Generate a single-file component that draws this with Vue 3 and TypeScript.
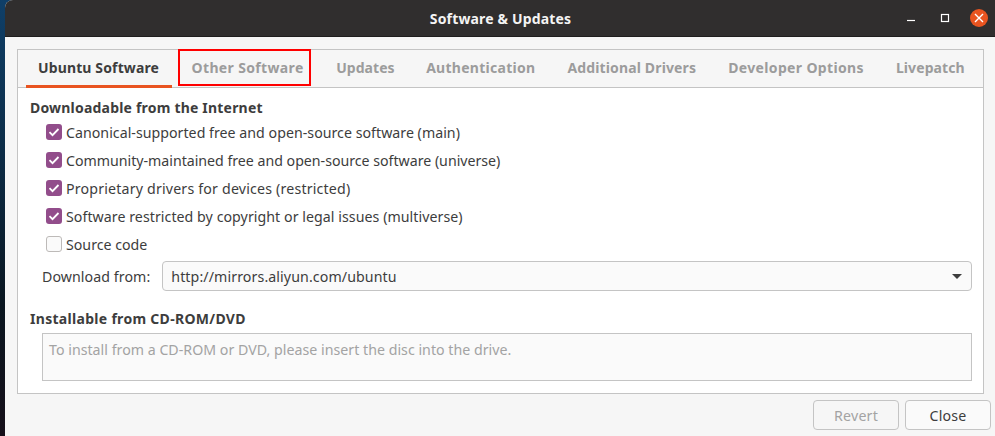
<script setup lang="ts">
const tabs = ['Ubuntu Software', 'Other Software', 'Updates', 'Authentication', 'Additional Drivers', 'Developer Options', 'Livepatch']
const sources = [
  { label: 'Canonical-supported free and open-source software (main)', on: true },
  { label: 'Community-maintained free and open-source software (universe)', on: true },
  { label: 'Proprietary drivers for devices (restricted)', on: true },
  { label: 'Software restricted by copyright or legal issues (multiverse)', on: true },
  { label: 'Source code', on: false },
]
</script>

<template>
  <div class="desktop">
    <div class="window">
      <header class="titlebar">
        <span class="title">Software &amp; Updates</span>
        <div class="controls">
          <svg class="ctl" width="16" height="16" viewBox="0 0 16 16"><path d="M4 10.5h8" stroke="#fff" stroke-width="1.2" fill="none" /></svg>
          <svg class="ctl" width="16" height="16" viewBox="0 0 16 16"><rect x="4.5" y="4.5" width="7" height="7" stroke="#fff" stroke-width="1.2" fill="none" /></svg>
          <span class="close-ctl">
            <svg width="18" height="18" viewBox="0 0 18 18"><path d="M5 5l8 8M13 5l-8 8" stroke="#fff" stroke-width="1.4" fill="none" /></svg>
          </span>
        </div>
      </header>

      <div class="body">
        <section class="notebook">
          <nav class="tabs">
            <div
              v-for="(t, i) in tabs"
              :key="t"
              class="tab"
              :class="{ active: i === 0, marked: i === 1 }"
            >{{ t }}</div>
          </nav>
          <div class="page">
            <h3 class="heading">Downloadable from the Internet</h3>
            <div class="checks">
              <label v-for="s in sources" :key="s.label" class="check">
                <span class="box" :class="{ on: s.on }">
                  <svg v-if="s.on" width="16" height="16" viewBox="0 0 16 16"><path d="M3.5 8.2l3 3 6-6.2" stroke="#fff" stroke-width="1.8" fill="none" /></svg>
                </span>
                <span>{{ s.label }}</span>
              </label>
            </div>
            <div class="download">
              <span class="dl-label">Download from:</span>
              <div class="combo">
                <span class="url">http://mirrors.aliyun.com/ubuntu</span>
                <span class="arrow"></span>
              </div>
            </div>
            <h3 class="heading cd">Installable from CD-ROM/DVD</h3>
            <div class="cdbox">To install from a CD-ROM or DVD, please insert the disc into the drive.</div>
          </div>
        </section>
        <footer class="actions">
          <button class="btn" disabled>Revert</button>
          <button class="btn">Close</button>
        </footer>
      </div>
    </div>
  </div>
</template>

<style>
html, body { margin: 0; background: #0b1a26; }
</style>

<style scoped>
.desktop {
  width: 995px;
  height: 436px;
  padding-left: 5px;
  box-sizing: border-box;
  background: linear-gradient(180deg, #0f3f68 0%, #0c2c47 35%, #0a1620 70%, #16101a 100%);
  font-family: "Noto Sans", sans-serif;
  font-size: 14.2px;
  color: #3d3d3d;
  overflow: hidden;
}
.window {
  height: 100%;
  display: flex;
  flex-direction: column;
  background: #f6f6f6;
  border-radius: 8px 0 0 0;
  overflow: hidden;
}
.titlebar {
  height: 37px;
  flex: none;
  position: relative;
  background: #302e2e;
  border-bottom: 1px solid #1f1e1e;
  box-sizing: border-box;
  display: flex;
  align-items: center;
  justify-content: center;
}
.title {
  color: #f4f4f4;
  font-weight: 700;
  font-size: 14px;
  letter-spacing: 0.15px;
  margin-left: 1px;
}
.controls {
  position: absolute;
  right: 7px;
  top: 9px;
  display: flex;
  align-items: center;
  gap: 18px;
}
.ctl { display: block; }
.ctl + .ctl { margin-right: -1px; }
.close-ctl {
  width: 18px;
  height: 18px;
  border-radius: 50%;
  background: #e95420;
  display: block;
}
.close-ctl svg { display: block; }
.body {
  flex: 1;
  display: flex;
  flex-direction: column;
  padding: 12px 4px 0 12px;
  min-height: 0;
}
.notebook {
  height: 345px;
  flex: none;
  margin-right: 7px;
  box-sizing: border-box;
  border: 1px solid #c4c4c4;
  display: flex;
  flex-direction: column;
  background: #fff;
}
.tabs {
  height: 37px;
  flex: none;
  display: flex;
  gap: 8px;
  padding-left: 8px;
  background: #f6f6f6;
  border-bottom: 1px solid #c4c4c4;
}
.tab {
  padding: 0 12px;
  height: 37px;
  box-sizing: border-box;
  line-height: 35px;
  font-weight: 700;
  font-size: 14px;
  letter-spacing: 0.2px;
  color: #9c9c9c;
  position: relative;
  white-space: nowrap;
}
.tab:nth-child(1) { letter-spacing: 0.13px; padding-right: 12.5px; }
.tab:nth-child(2) { letter-spacing: 0.35px; padding-right: 12.5px; }
.tab:nth-child(3) { letter-spacing: 0.05px; padding-right: 11.5px; }
.tab:nth-child(4) { letter-spacing: 0.28px; }
.tab:nth-child(5) { letter-spacing: 0.14px; }
.tab:nth-child(6) { letter-spacing: 0.35px; }
.tab:nth-child(7) { letter-spacing: 0.09px; }
.tab.active {
  color: #3d3d3d;
  border-bottom: 3px solid #e95420;
  height: 38px;
}
.tab.marked::after {
  content: "";
  position: absolute;
  left: -2px;
  top: -1px;
  width: 133px;
  height: 37px;
  box-sizing: border-box;
  border: 2px solid #f00;
}
.page {
  flex: 1;
  padding: 10px 11px 0 12px;
  display: flex;
  flex-direction: column;
}
.heading {
  margin: 0;
  font-size: 14px;
  letter-spacing: 0.2px;
  line-height: 19px;
  font-weight: 700;
  color: #3d3d3d;
}
.checks {
  margin-top: 1px;
  padding-left: 16px;
  display: flex;
  flex-direction: column;
}
.check {
  height: 28px;
  display: flex;
  align-items: center;
  gap: 4px;
  white-space: nowrap;
}
.check:nth-child(1) { letter-spacing: 0.02px; }
.check:nth-child(2) { letter-spacing: -0.016px; }
.check:nth-child(3) { letter-spacing: 0.18px; }
.check:nth-child(4) { letter-spacing: 0.05px; }
.box {
  width: 16px;
  height: 16px;
  box-sizing: border-box;
  border: 1px solid #bdbab8;
  border-radius: 3px;
  background: #fafafa;
  flex: none;
}
.box.on {
  border: 0;
  background: #924d8b;
}
.box svg { display: block; }
.download {
  margin-top: 3px;
  padding-left: 12px;
  display: flex;
  align-items: center;
  gap: 12px;
}
.dl-label { letter-spacing: 0.07px; }
.url { letter-spacing: 0.1px; }
.combo {
  flex: 1;
  height: 30px;
  box-sizing: border-box;
  border: 1px solid #c4c4c4;
  border-radius: 4px;
  background: #fafafa;
  display: flex;
  align-items: center;
  justify-content: space-between;
  padding: 0 9px 0 8px;
}
.arrow {
  width: 0;
  height: 0;
  border-left: 5px solid transparent;
  border-right: 5px solid transparent;
  border-top: 5px solid #3d3d3d;
}
.heading.cd {
  margin-top: 18px;
  letter-spacing: 0.3px;
}
.cdbox {
  margin: 5px 0 0 12px;
  height: 48px;
  box-sizing: border-box;
  border: 1px solid #c4c4c4;
  background: #fafafa;
  padding: 6px 6px;
  color: #a3a3a3;
  letter-spacing: 0.015px;
}
.actions {
  display: flex;
  justify-content: flex-end;
  gap: 6px;
  padding-top: 6px;
}
.btn {
  font: inherit;
  font-size: 14.2px;
  letter-spacing: 0.2px;
  width: 86px;
  height: 30px;
  border: 1px solid #c4c4c4;
  border-radius: 4px;
  background: #fafafa;
  color: #3d3d3d;
  padding: 0;
}
.btn:disabled {
  background: #f6f6f6;
  color: #a3a3a3;
}
</style>
